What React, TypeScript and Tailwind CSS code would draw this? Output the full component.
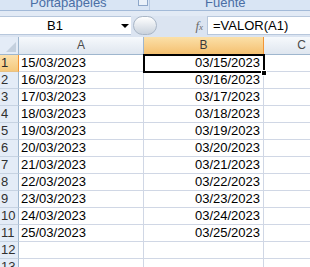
const rows = Array.from({ length: 11 }, (_, i) => {
  const d = String(15 + i);
  return { n: i + 1, a: `${d}/03/2023`, b: `03/${d}/2023` };
});

function RowHeader({ n, active }: { n?: number; active?: boolean }) {
  return (
    <div
      className={`w-[19px] shrink-0 h-full border-r border-b pl-[1px] text-[13px] leading-[16px] ${
        active
          ? "bg-gradient-to-b from-[#fbe1ad] to-[#f5c97c] border-r-[#f29536] border-b-[#e9c183] text-[#2a2a2a]"
          : "bg-[#e4ecf7] border-r-[#9eb6ce] border-b-[#c7d3e2] text-[#303030]"
      }`}
    >
      {n}
    </div>
  );
}

function ColHeader({ label, w, active }: { label: string; w: string; active?: boolean }) {
  return (
    <div
      className={`${w} shrink-0 h-full border-r border-b text-center text-[12px] leading-[17px] ${
        active
          ? "bg-gradient-to-b from-[#fbe0a8] to-[#f4c070] border-r-[#f29536] border-b-[#f29536] text-[#3a3a3a]"
          : "bg-gradient-to-b from-[#f6f9fc] to-[#dfe6ef] border-r-[#9eb6ce] border-b-[#9eb6ce] text-[#4a4a4a]"
      }`}
    >
      {label}
    </div>
  );
}

export default function App() {
  return (
    <div className="w-[310px] h-[267px] overflow-hidden bg-white font-['Liberation_Sans',Arial,sans-serif]">
      {/* ribbon group labels */}
      <div className="h-[11px] flex bg-[#d9e5f4] border-b border-[#a3bad8] overflow-hidden text-[13px] text-[#4a6ea5]">
        <div className="w-[150px] shrink-0 flex border-r border-[#b9cce4] relative">
          <span className="mt-[-4px] ml-[30px] leading-[13px]">Portapapeles</span>
          <span className="absolute left-[138px] top-[-3px] w-[10px] h-[9px] border border-[#8ea7c9] bg-[#eaf1f9]" />
        </div>
        <span className="mt-[-4px] ml-[55px] leading-[13px]">Fuente</span>
      </div>
      <div className="h-[5px] bg-[#e2eaf5]" />

      {/* formula bar */}
      <div className="h-[19px] flex bg-[#dbe4f1]">
        <div className="w-[131px] shrink-0 flex items-center bg-white border-y border-[#b7c7dc]">
          <span className="w-[110px] text-center text-[13px] leading-none text-black">B1</span>
          <span className="ml-[11px] w-0 h-0 border-x-[4px] border-x-transparent border-t-[4px] border-t-black" />
        </div>
        <div className="w-[24px] h-[19px] ml-[2px] rounded-full border border-[#a9b6c6] bg-gradient-to-b from-white to-[#c9d2dd]" />
        <div className="flex-1 flex items-center justify-end pr-[4px]">
          <span className="font-['Liberation_Serif',serif] italic text-[13px] text-[#6a6a6a] leading-none">
            f<span className="text-[9px]">x</span>
          </span>
        </div>
        <div className="w-[103px] shrink-0 flex items-center bg-white border-y border-l border-[#b7c7dc] pl-[5px] text-[13px] leading-none text-black">
          =VALOR(A1)
        </div>
      </div>
      <div className="h-[2px] bg-[#dbe4f1]" />

      {/* column headers */}
      <div className="h-[18px] flex">
        <div className="w-[19px] shrink-0 h-full bg-[#e4ecf7] border-r border-b border-[#9eb6ce] relative">
          <span className="absolute right-[2px] bottom-[2px] w-0 h-0 border-l-[10px] border-l-transparent border-b-[10px] border-b-[#c4d0de]" />
        </div>
        <ColHeader label="A" w="w-[125px]" />
        <ColHeader label="B" w="w-[120px]" active />
        <ColHeader label="C" w="w-[76px]" />
      </div>

      {/* grid */}
      <div className="relative text-[13px] text-black">
        {rows.map((r) => (
          <div key={r.n} className="h-[17px] flex">
            <RowHeader n={r.n} active={r.n === 1} />
            <div className="w-[125px] shrink-0 border-r border-b border-[#d0d7e5] pl-[2px] leading-[16px]">{r.a}</div>
            <div className="w-[120px] shrink-0 border-r border-b border-[#d0d7e5] pr-[3px] text-right leading-[16px]">{r.b}</div>
            <div className="w-[76px] shrink-0 border-r border-b border-[#d0d7e5]" />
          </div>
        ))}
        {[12, 13].map((n) => (
          <div key={n} className="h-[17px] flex">
            <RowHeader n={n} />
            <div className="w-[125px] shrink-0 border-r border-b border-[#d0d7e5]" />
            <div className="w-[120px] shrink-0 border-r border-b border-[#d0d7e5]" />
            <div className="w-[76px] shrink-0 border-r border-b border-[#d0d7e5]" />
          </div>
        ))}
        {/* active cell */}
        <div className="absolute left-[143px] top-[-1px] w-[122px] h-[19px] border-2 border-black" />
        <div className="absolute left-[261px] top-[15px] w-[6px] h-[6px] bg-black border border-white" />
      </div>
    </div>
  );
}
